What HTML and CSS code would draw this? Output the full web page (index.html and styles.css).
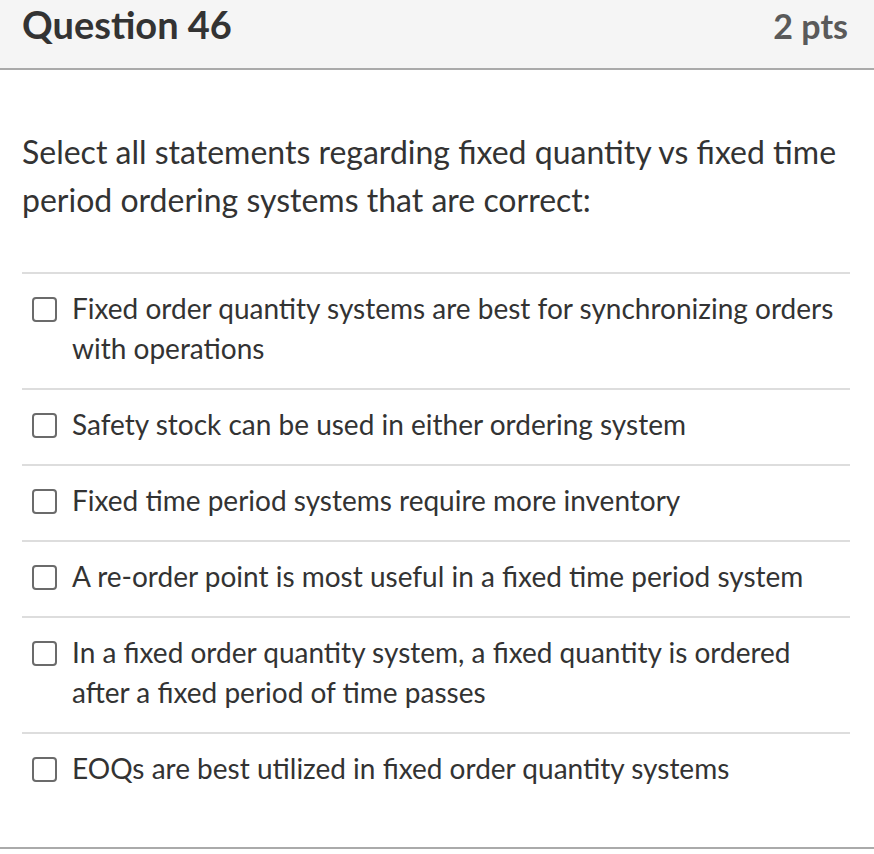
FILE: index.html
```html
<!DOCTYPE html>
<html>
<head>
<meta charset="utf-8">
<link rel="stylesheet" href="styles.css">
</head>
<body>
<div class="question">
  <div class="header">
    <div class="title">Question 46</div>
    <div class="points">2 pts</div>
  </div>
  <div class="content">
    <div class="prompt">Select all statements regarding fixed quantity vs fixed time period ordering systems that are correct:</div>
    <div class="answers">
      <div class="answer"><span class="box"></span><span class="label">Fixed order quantity systems are best for synchronizing orders with operations</span></div>
      <div class="answer"><span class="box"></span><span class="label">Safety stock can be used in either ordering system</span></div>
      <div class="answer"><span class="box"></span><span class="label">Fixed time period systems require more inventory</span></div>
      <div class="answer"><span class="box"></span><span class="label">A re-order point is most useful in a fixed time period system</span></div>
      <div class="answer"><span class="box"></span><span class="label">In a fixed order quantity system, a fixed quantity is ordered after a fixed period of time passes</span></div>
      <div class="answer"><span class="box"></span><span class="label">EOQs are best utilized in fixed order quantity systems</span></div>
    </div>
  </div>
</div>
</body>
</html>
```
FILE: styles.css
```css
html, body {
  margin: 0;
  padding: 0;
  background: #ffffff;
}
body {
  font-family: Lato, "Noto Sans", sans-serif;
  color: #333333;
}
.question {
  border-bottom: 2px solid #aaaaaa;
}
.header {
  height: 70px;
  box-sizing: border-box;
  background: #f5f5f5;
  border-bottom: 2px solid #aaaaaa;
  display: flex;
  justify-content: space-between;
  align-items: baseline;
  padding: 2px 26px 0 22px;
  line-height: 1.2;
}
.title {
  font-size: 38px;
  font-weight: 700;
  color: #333333;
}
.points {
  font-size: 34px;
  font-weight: 700;
  color: #5a5a5a;
}
.content {
  padding: 58px 24px 39px 22px;
}
.prompt {
  font-size: 32px;
  line-height: 48px;
  margin-bottom: 48px;
}
.answers {
  display: flex;
  flex-direction: column;
}
.answer {
  border-top: 2px solid #dddddd;
  padding: 14px 0 20px 10px;
  display: flex;
  align-items: flex-start;
  gap: 15px;
  font-size: 28px;
  line-height: 40px;
}
.box {
  flex: none;
  width: 25px;
  height: 25px;
  box-sizing: border-box;
  border: 2px solid #6b6b6b;
  border-radius: 4px;
  margin-top: 9px;
}
.label {
  flex: 1;
}
```
